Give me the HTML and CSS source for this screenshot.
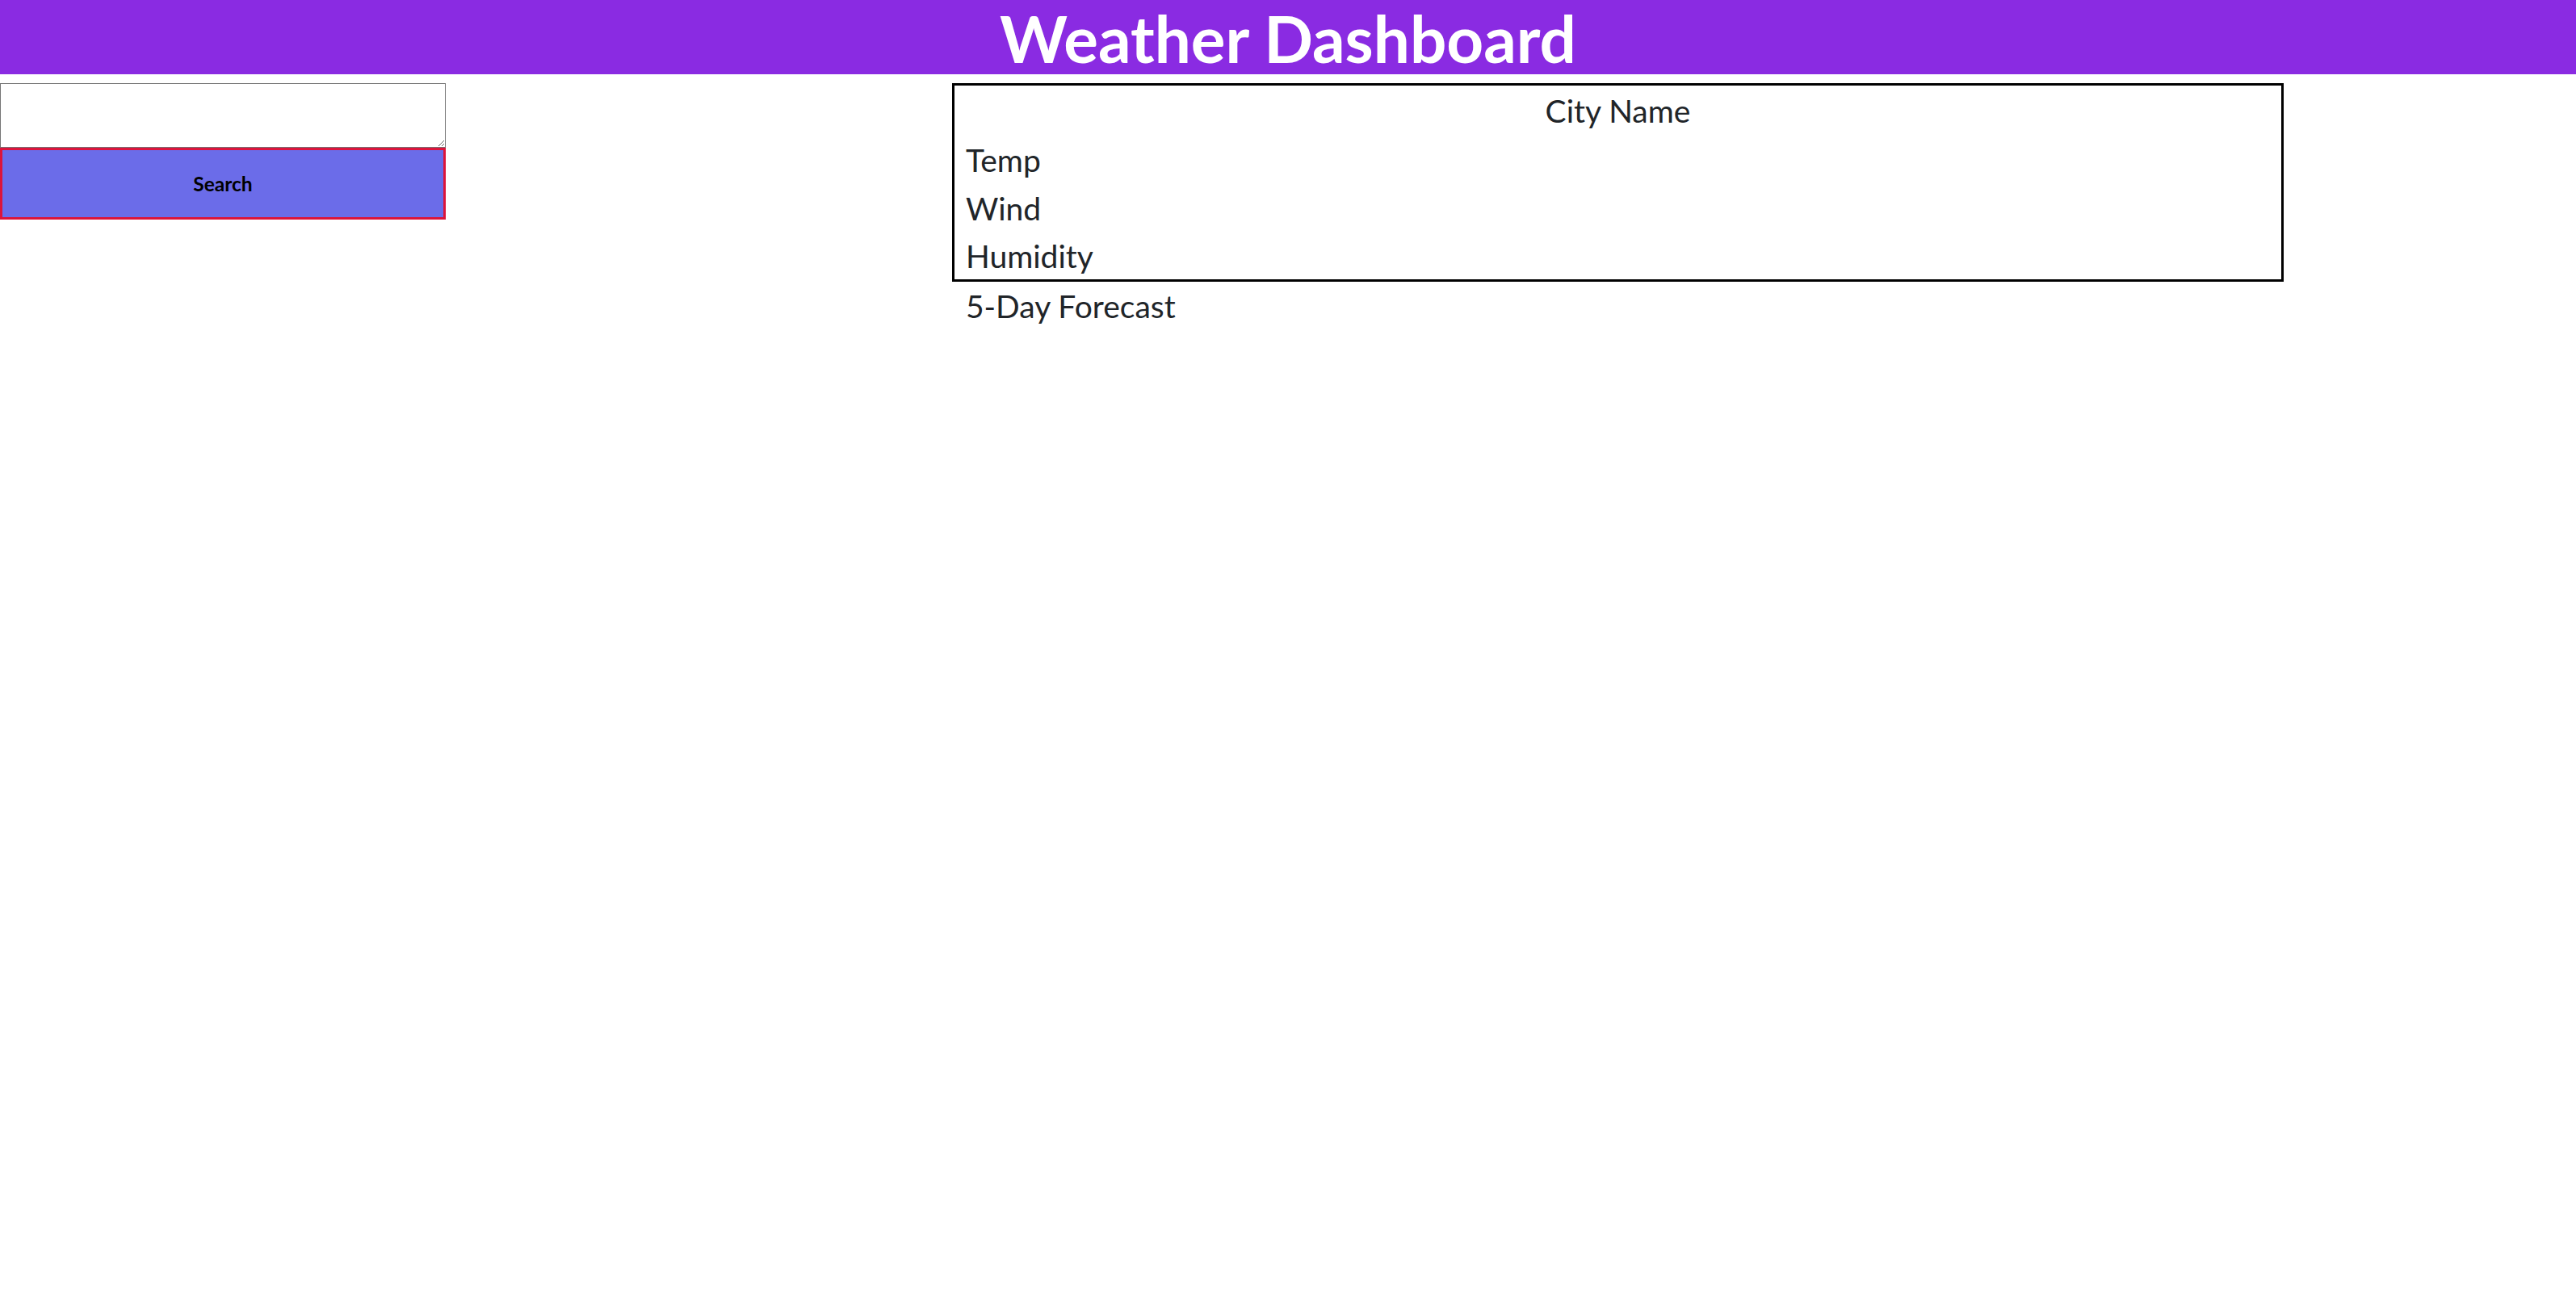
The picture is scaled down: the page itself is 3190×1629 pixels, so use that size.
FILE: index.html
```html
<!DOCTYPE html>
<html lang="en">
<head>
<meta charset="utf-8">
<title>Weather Dashboard</title>
<link rel="stylesheet" href="styles.css">
</head>
<body>
<header class="topbar"><h1 class="title">Weather Dashboard</h1></header>
<div class="layout">
  <aside class="sidebar">
    <textarea class="search-input"></textarea>
    <button class="search-btn">Search</button>
  </aside>
  <main class="main">
    <section class="current">
      <div class="city">City Name</div>
      <div class="stat">Temp</div>
      <div class="stat">Wind</div>
      <div class="stat">Humidity</div>
    </section>
    <div class="forecast">5-Day Forecast</div>
  </main>
</div>
</body>
</html>
```
FILE: styles.css
```css
html, body { margin: 0; padding: 0; }
body {
  font-family: Lato, "Open Sans", sans-serif;
  color: #212529;
  background: #fff;
}
.topbar {
  background: #8a2be2;
  height: 92px;
  display: flex;
  align-items: center;
  justify-content: center;
}
.title {
  margin: 0;
  padding-top: 2px;
  color: #fff;
  font-size: 80px;
  font-weight: 700;
  line-height: 92px;
}
.layout {
  display: flex;
  padding-top: 11px;
}
.sidebar {
  width: 552px;
  display: flex;
  flex-direction: column;
}
.search-input {
  display: block;
  box-sizing: border-box;
  width: 552px;
  height: 80px;
  margin: 0;
  border: 1px solid #767676;
}
.search-btn {
  box-sizing: border-box;
  width: 552px;
  height: 89px;
  margin: 0;
  border: 3px solid #dc143c;
  background: #6b6ce9;
  color: #000;
  font-family: inherit;
  font-weight: 700;
  font-size: 24.5px;
}
.main {
  margin-left: 627px;
  width: 1649px;
  font-size: 39px;
  line-height: 60px;
}
.current {
  border: 3px solid #000;
}
.city {
  text-align: center;
  line-height: 62px;
}
.stat { padding-left: 14px; }
.stat:last-child { line-height: 58px; }
.forecast { padding-left: 17px; }
```
